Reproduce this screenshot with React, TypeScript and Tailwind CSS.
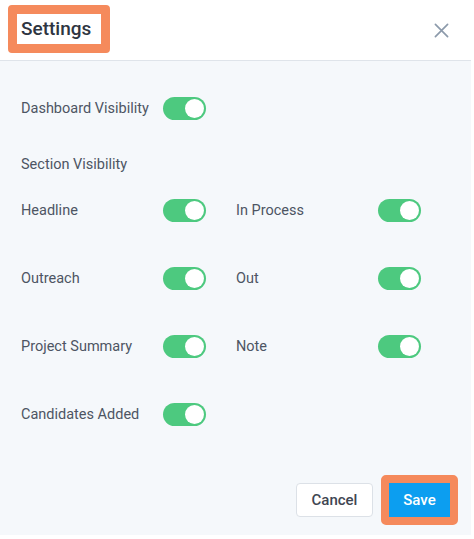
import { useState } from 'react';

type Item = { label: string; on: boolean };

function Toggle({ on, onClick }: { on: boolean; onClick: () => void }) {
  return (
    <button
      onClick={onClick}
      className={`flex h-[23px] w-[43px] shrink-0 items-center rounded-full p-[2px] ${on ? 'justify-end bg-[#4dc97f]' : 'justify-start bg-[#d3d9e0]'}`}
    >
      <span className="h-[19px] w-[19px] rounded-full bg-white" />
    </button>
  );
}

export default function App() {
  const [dashboard, setDashboard] = useState(true);
  const [items, setItems] = useState<Item[]>([
    { label: 'Headline', on: true },
    { label: 'In Process', on: true },
    { label: 'Outreach', on: true },
    { label: 'Out', on: true },
    { label: 'Project Summary', on: true },
    { label: 'Note', on: true },
    { label: 'Candidates Added', on: true },
  ]);

  const flip = (i: number) =>
    setItems(items.map((it, idx) => (idx === i ? { ...it, on: !it.on } : it)));

  return (
    <div className="h-[539px] w-[474px] bg-white font-['Roboto','Liberation_Sans',sans-serif]">
      <div className="flex h-[535px] w-[471px] flex-col">
        {/* header */}
        <div className="flex h-[61px] shrink-0 items-center justify-between border-b border-[#dfe4ea] bg-white pl-[8px] pr-[22px]">
          <span className="mb-[2px] rounded-[4px] border-[9px] border-[#f58a5c] bg-white pl-[4px] pr-[10px] text-[19px] leading-[30px] font-medium text-[#2e3541]">
            Settings
          </span>
          <button className="text-[#8c9aab]">
            <svg width="15" height="15" viewBox="0 0 16 16" fill="none" stroke="currentColor" strokeWidth="1.8" strokeLinecap="round">
              <path d="M1.5 1.5l13 13M14.5 1.5l-13 13" />
            </svg>
          </button>
        </div>

        {/* body */}
        <div className="flex flex-1 flex-col bg-[#f5f8fb] px-[21px] pt-[36px] pb-[10px] text-[14.5px] text-[#4d5563]">
          <div className="flex h-[23px] items-center">
            <span className="w-[142px]">Dashboard Visibility</span>
            <Toggle on={dashboard} onClick={() => setDashboard(!dashboard)} />
          </div>

          <div className="mt-[35px] leading-[20px]">Section Visibility</div>

          <div className="mt-[24px] grid grid-cols-[215px_215px] gap-y-[45px]">
            {items.map((it, i) => (
              <div key={it.label} className="flex h-[23px] items-center">
                <span className="w-[142px]">{it.label}</span>
                <Toggle on={it.on} onClick={() => flip(i)} />
              </div>
            ))}
          </div>

          <div className="mt-auto flex items-center justify-end gap-[8px]">
            <button className="h-[34px] w-[77px] rounded-[4px] border border-[#dce1e7] bg-white text-[15px] font-medium text-[#3f4652]">
              Cancel
            </button>
            <div className="-mr-[8px] rounded-[5px] border-[8px] border-[#f58a5c]">
              <button className="block h-[34px] w-[61px] bg-[#0c9ef0] text-[15px] font-medium text-white">
                Save
              </button>
            </div>
          </div>
        </div>
      </div>
    </div>
  );
}
